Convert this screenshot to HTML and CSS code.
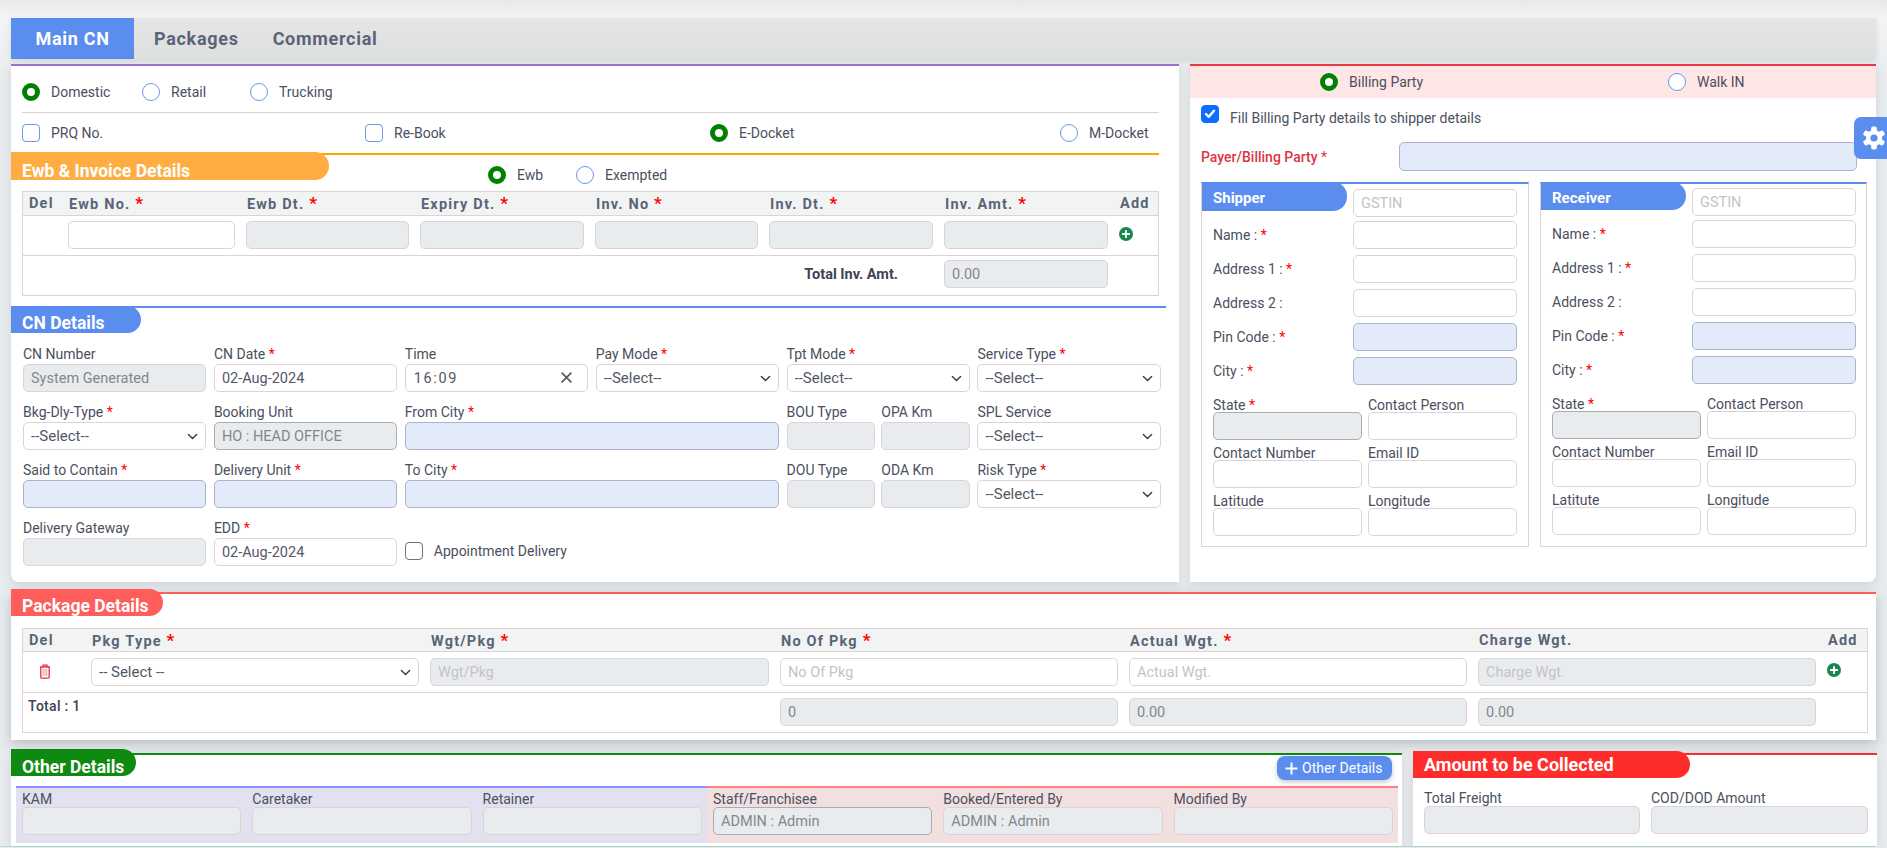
FILE: index.html
```html
<!DOCTYPE html>
<html lang="en">
<head>
<meta charset="utf-8">
<title>Main CN</title>
<link rel="stylesheet" href="styles.css">
</head>
<body>
<div class="page">
  <nav class="tabs">
    <a class="tab active">Main CN</a>
    <a class="tab first-plain">Packages</a>
    <a class="tab">Commercial</a>
  </nav>

  <div class="top-row">
    <section class="card left-card">
      <div class="opt-row type-row">
        <label class="opt w120"><input type="radio" class="radio" name="t" checked><span>Domestic</span></label>
        <label class="opt w108"><input type="radio" class="radio" name="t"><span>Retail</span></label>
        <label class="opt"><input type="radio" class="radio" name="t"><span>Trucking</span></label>
      </div>
      <div class="opt-row docket-row">
        <label class="opt w343"><input type="checkbox" class="check"><span>PRQ No.</span></label>
        <label class="opt w345"><input type="checkbox" class="check"><span>Re-Book</span></label>
        <label class="opt w350"><input type="radio" class="radio" name="d" checked><span>E-Docket</span></label>
        <label class="opt"><input type="radio" class="radio" name="d"><span>M-Docket</span></label>
      </div>

      <div class="sec sec-orange">
        <div class="sec-head">
          <h2 class="sec-tab tab-orange">Ewb &amp; Invoice Details</h2>
          <div class="ewb-opts">
            <label class="opt w88"><input type="radio" class="radio" name="e" checked><span>Ewb</span></label>
            <label class="opt"><input type="radio" class="radio" name="e"><span>Exempted</span></label>
          </div>
        </div>
        <div class="tbl ewb-tbl">
          <div class="tr th">
            <div class="del-h">Del</div>
            <div>Ewb No. <b>*</b></div><div>Ewb Dt. <b>*</b></div><div>Expiry Dt. <b>*</b></div>
            <div>Inv. No <b>*</b></div><div>Inv. Dt. <b>*</b></div><div>Inv. Amt. <b>*</b></div><div>Add</div>
          </div>
          <div class="tr td">
            <div></div>
            <div><input class="in"></div><div><input class="in off" disabled></div><div><input class="in off" disabled></div>
            <div><input class="in off" disabled></div><div><input class="in off" disabled></div><div><input class="in off" disabled></div>
            <div><svg class="add" viewBox="0 0 14 14"><circle cx="7" cy="7" r="7"/><path d="M7 3.8v6.4M3.8 7h6.4"/></svg></div>
          </div>
          <div class="tr td total">
            <div class="total-label">Total Inv. Amt.</div>
            <div><input class="in off" disabled value="0.00"></div>
            <div></div>
          </div>
        </div>
      </div>

      <div class="sec sec-blue">
        <div class="sec-head cn-head"><h2 class="sec-tab tab-blue">CN Details</h2></div>
        <div class="cn-grid">
          <div class="f"><label>CN Number</label><input class="in off" disabled value="System Generated"></div>
          <div class="f"><label>CN Date <b>*</b></label><input class="in" value="02-Aug-2024"></div>
          <div class="f"><label>Time</label>
            <div class="time"><input class="in spaced" value="16:09"><svg class="clear" viewBox="0 0 12 12"><path d="M1.5 1.5l9 9M10.5 1.5l-9 9"/></svg></div>
          </div>
          <div class="f"><label>Pay Mode <b>*</b></label><select class="in sel"><option>--Select--</option></select></div>
          <div class="f"><label>Tpt Mode <b>*</b></label><select class="in sel"><option>--Select--</option></select></div>
          <div class="f"><label>Service Type <b>*</b></label><select class="in sel"><option>--Select--</option></select></div>

          <div class="f"><label>Bkg-Dly-Type <b>*</b></label><select class="in sel"><option>--Select--</option></select></div>
          <div class="f"><label>Booking Unit</label><input class="in off dark" disabled value="HO : HEAD OFFICE"></div>
          <div class="f span2"><label>From City <b>*</b></label><input class="in req"></div>
          <div class="pair">
            <div class="f"><label>BOU Type</label><input class="in off" disabled></div>
            <div class="f"><label>OPA Km</label><input class="in off" disabled></div>
          </div>
          <div class="f"><label>SPL Service</label><select class="in sel"><option>--Select--</option></select></div>

          <div class="f"><label>Said to Contain <b>*</b></label><input class="in req"></div>
          <div class="f"><label>Delivery Unit <b>*</b></label><input class="in req"></div>
          <div class="f span2"><label>To City <b>*</b></label><input class="in req"></div>
          <div class="pair">
            <div class="f"><label>DOU Type</label><input class="in off" disabled></div>
            <div class="f"><label>ODA Km</label><input class="in off" disabled></div>
          </div>
          <div class="f"><label>Risk Type <b>*</b></label><select class="in sel"><option>--Select--</option></select></div>

          <div class="f"><label>Delivery Gateway</label><input class="in off" disabled></div>
          <div class="f"><label>EDD <b>*</b></label><input class="in" value="02-Aug-2024"></div>
          <div class="appt"><label class="opt"><input type="checkbox" class="check grey"><span>Appointment Delivery</span></label></div>
        </div>
      </div>
    </section>

    <section class="card right-card">
      <div class="band">
        <label class="opt w348"><input type="radio" class="radio" name="b" checked><span>Billing Party</span></label>
        <label class="opt"><input type="radio" class="radio" name="b"><span>Walk IN</span></label>
      </div>
      <label class="fill"><input type="checkbox" class="check on" checked><span>Fill Billing Party details to shipper details</span></label>
      <div class="payer"><label>Payer/Billing Party <b>*</b></label><input class="in req"></div>
      <div class="boxes">
        <div class="box">
          <div class="box-head"><h3>Shipper</h3><input class="in gstin" placeholder="GSTIN"></div>
          <div class="kv"><label>Name : <b>*</b></label><input class="in"></div>
          <div class="kv"><label>Address 1 : <b>*</b></label><input class="in"></div>
          <div class="kv"><label>Address 2 :</label><input class="in"></div>
          <div class="kv"><label>Pin Code : <b>*</b></label><input class="in req"></div>
          <div class="kv"><label>City : <b>*</b></label><input class="in req"></div>
          <div class="two">
            <div class="g"><label>State <b>*</b></label><input class="in off dark" disabled></div>
            <div class="g"><label>Contact Person</label><input class="in"></div>
            <div class="g"><label>Contact Number</label><input class="in"></div>
            <div class="g"><label>Email ID</label><input class="in"></div>
            <div class="g"><label>Latitude</label><input class="in"></div>
            <div class="g"><label>Longitude</label><input class="in"></div>
          </div>
        </div>
        <div class="box box-r">
          <div class="box-head"><h3>Receiver</h3><input class="in gstin" placeholder="GSTIN"></div>
          <div class="kv"><label>Name : <b>*</b></label><input class="in"></div>
          <div class="kv"><label>Address 1 : <b>*</b></label><input class="in"></div>
          <div class="kv"><label>Address 2 :</label><input class="in"></div>
          <div class="kv"><label>Pin Code : <b>*</b></label><input class="in req"></div>
          <div class="kv"><label>City : <b>*</b></label><input class="in req"></div>
          <div class="two">
            <div class="g"><label>State <b>*</b></label><input class="in off dark" disabled></div>
            <div class="g"><label>Contact Person</label><input class="in"></div>
            <div class="g"><label>Contact Number</label><input class="in"></div>
            <div class="g"><label>Email ID</label><input class="in"></div>
            <div class="g"><label>Latitute</label><input class="in"></div>
            <div class="g"><label>Longitude</label><input class="in"></div>
          </div>
        </div>
      </div>
      <button class="gear" aria-label="Settings">
        <svg viewBox="0 0 24 24"><g fill="#fff"><rect x="9.2" y="0.5" width="5.6" height="23" rx="1.8"/><rect x="9.2" y="0.5" width="5.6" height="23" rx="1.8" transform="rotate(60 12 12)"/><rect x="9.2" y="0.5" width="5.6" height="23" rx="1.8" transform="rotate(120 12 12)"/><circle cx="12" cy="12" r="8"/></g><circle cx="12" cy="12" r="3.6" fill="#5b8def"/></svg>
      </button>
    </section>
  </div>

  <section class="card pkg-card">
    <div class="sec-head pkg-head"><h2 class="sec-tab tab-red">Package Details</h2></div>
    <div class="tbl pkg-tbl">
      <div class="tr th">
        <div class="del-h">Del</div>
        <div>Pkg Type <b>*</b></div><div>Wgt/Pkg <b>*</b></div><div>No Of Pkg <b>*</b></div>
        <div>Actual Wgt. <b>*</b></div><div>Charge Wgt.</div><div>Add</div>
      </div>
      <div class="tr td">
        <div class="trash-cell">
          <svg class="trash" viewBox="0 0 12 15"><path class="t-line" d="M1 3h10M4 3V1.2h4V3M1.8 3v10.2c0 .6.4 1 1 1h6.4c.6 0 1-.4 1-1V3"/><path class="t-bars" d="M4.2 5v7M6 5v7M7.8 5v7"/></svg>
        </div>
        <div><select class="in sel"><option>-- Select --</option></select></div>
        <div><input class="in off" disabled placeholder="Wgt/Pkg"></div>
        <div><input class="in" placeholder="No Of Pkg"></div>
        <div><input class="in" placeholder="Actual Wgt."></div>
        <div><input class="in off" disabled placeholder="Charge Wgt."></div>
        <div><svg class="add" viewBox="0 0 14 14"><circle cx="7" cy="7" r="7"/><path d="M7 3.8v6.4M3.8 7h6.4"/></svg></div>
      </div>
      <div class="tr td total">
        <div class="pkg-total">Total : 1</div>
        <div><input class="in off" disabled value="0"></div>
        <div><input class="in off" disabled value="0.00"></div>
        <div><input class="in off" disabled value="0.00"></div>
        <div></div>
      </div>
    </div>
  </section>

  <div class="bottom-row">
    <section class="card other-card">
      <div class="sec-head other-head">
        <h2 class="sec-tab tab-green">Other Details</h2>
        <button class="more"><svg viewBox="0 0 12 12"><path d="M6 .5v11M.5 6h11"/></svg>Other Details</button>
      </div>
      <div class="panels">
        <div class="panel panel-violet">
          <div class="f"><label>KAM</label><input class="in off" disabled></div>
          <div class="f"><label>Caretaker</label><input class="in off" disabled></div>
          <div class="f"><label>Retainer</label><input class="in off" disabled></div>
        </div>
        <div class="panel panel-rose">
          <div class="f"><label>Staff/Franchisee</label><input class="in off dark" disabled value="ADMIN : Admin"></div>
          <div class="f"><label>Booked/Entered By</label><input class="in off" disabled value="ADMIN : Admin"></div>
          <div class="f"><label>Modified By</label><input class="in off" disabled></div>
        </div>
      </div>
    </section>
    <section class="card amount-card">
      <div class="sec-head amount-head"><h2 class="sec-tab tab-crimson">Amount to be Collected</h2></div>
      <div class="amount-grid">
        <div class="f"><label>Total Freight</label><input class="in off" disabled></div>
        <div class="f"><label>COD/DOD Amount</label><input class="in off" disabled></div>
      </div>
    </section>
  </div>
  <div class="foot-line"></div>
</div>
</body>
</html>
```

FILE: styles.css
```css
* { box-sizing: border-box; }
html, body { margin: 0; height: 100%; }
body {
  background: linear-gradient(#e6e8ea 0, #f3f4f5 16px, #e9ecef 80px);
  font: 14px/20px Roboto, "Liberation Sans", sans-serif;
  color: #4a5060;
  overflow: hidden;
}
.page { width: 1887px; height: 848px; padding: 18px 0 0 11px; overflow: hidden; border-top: 1px solid #fff; margin-top: -1px; }
b { font-weight: 400; color: #f00; }
h2, h3 { margin: 0; }
label { display: block; }

/* tabs */
.tabs { display: flex; width: 1865px; height: 41px; background: linear-gradient(#e5e5e5, #dedfdf); box-shadow: 0 2px 6px rgba(0,0,0,.1); }
.tab { padding: 0 17px; font-size: 18px; font-weight: 700; line-height: 41px; color: #5a6478; letter-spacing: .7px; }
.tab.active { width: 123px; padding: 0; text-align: center; background: #5b8def; color: #fff; }
.first-plain { margin-left: 3px; }

/* cards */
.top-row { display: flex; gap: 11px; margin-top: 5px; height: 518px; }
.card { background: #fff; box-shadow: 0 3px 10px rgba(60,70,80,.14); }
.left-card { width: 1168px; border-top: 2px solid #9b70d4; border-bottom-left-radius: 8px; padding-left: 11px; }
.right-card { width: 686px; border-top: 2px solid #e63946; border-bottom-right-radius: 8px; position: relative; }

/* options */
.opt-row { display: flex; align-items: center; width: 1137px; }
.type-row { height: 47px; padding-top: 5px; border-bottom: 1px solid #d4d4d4; }
.docket-row { height: 40px; }
.opt { display: inline-flex; align-items: center; gap: 11px; }
.w120 { width: 120px; } .w108 { width: 108px; } .w343 { width: 343px; } .w345 { width: 345px; } .w350 { width: 350px; } .w88 { width: 88px; } .w348 { width: 348px; }
.radio, .check { appearance: none; margin: 0; flex: none; width: 18px; height: 18px; background: #fff; border: 1px solid #6d97e9; }
.radio { border-radius: 50%; }
.radio:checked { border: 5px solid #008000; }
.check { border-radius: 4px; }
.check.grey { border-color: #6d7378; }
.check.on {
  background: #0d6efd url("data:image/svg+xml,%3Csvg xmlns='http://www.w3.org/2000/svg' viewBox='0 0 20 20'%3E%3Cpath fill='none' stroke='%23fff' stroke-linecap='round' stroke-linejoin='round' stroke-width='3' d='M5 10l3.5 3.5L15 6'/%3E%3C/svg%3E") center/100% no-repeat;
  border-color: #0d6efd;
}

/* sections */
.sec { border-top: 2px solid; }
.sec-orange { width: 1148px; border-color: #ffa500; margin-left: -11px; }
.sec-blue { width: 1155px; border-color: #5b8def; margin: 10px 0 0 -11px; }
.sec-head { display: flex; }
.sec-tab { font-size: 17.5px; font-weight: 700; color: #fff; padding-left: 11px; border-radius: 0 14px 14px 0; height: 28px; white-space: nowrap; overflow: hidden; }
.tab-orange { width: 318px; margin-top: -3px; background: #ffad42; line-height: 38px; }
.tab-blue { width: 130px; height: 27px; margin-top: -2px; background: #5b8def; line-height: 34px; }
.tab-red { width: 152px; height: 27px; margin-top: -5px; background: #ff5c5c; line-height: 34px; }
.tab-green { width: 125px; height: 27px; margin-top: -6px; background: #0f8a10; line-height: 36px; }
.tab-crimson { width: 277px; height: 27px; margin-top: -4px; background: #ff2c2c; font-size: 18px; line-height: 28px; }
.ewb-opts { display: flex; align-items: center; margin: 11px 0 0 159px; height: 18px; }
.sec-orange .sec-head { height: 36px; }

/* tables */
.tbl { border: 1px solid #ddd3d6; margin-left: 11px; }
.ewb-tbl { width: 1137px; height: 105px; }
.tr { display: grid; }
.ewb-tbl .tr { grid-template-columns: 45px 178px 174px 175px 174px 175px 175px 1fr; }
.pkg-tbl .tr { grid-template-columns: 68px 339px 350px 349px 349px 349px 1fr; }
.th { height: 24px; background: #f2f4f4; border-bottom: 1px solid #ddd3d6; font-size: 14.5px; font-weight: 700; letter-spacing: 1.2px; color: #5a6478; line-height: 23px; }
.pkg-tbl .th { height: 23px; }
.th > div { padding-left: 1px; white-space: nowrap; }
.th .del-h { padding-left: 6px; }
.th b { font-weight: 700; font-size: 17px; }
.td > div { padding-right: 11px; }
.ewb-tbl .td { height: 40px; padding-top: 5px; border-bottom: 1px solid #ddd3d6; }
.ewb-tbl .total { height: 39px; padding-top: 4px; border-bottom: 0; grid-template-columns: 921px 175px 1fr; }
.total-label { text-align: right; padding: 5px 46px 0 0 !important; font-size: 14.5px; font-weight: 700; color: #3e4356; }
.pkg-tbl { width: 1846px; height: 105px; }
.pkg-tbl .td { height: 41px; padding-top: 6px; border-bottom: 1px solid #ddd3d6; }
.pkg-tbl .total { height: 40px; padding-top: 5px; border-bottom: 0; grid-template-columns: 757px 349px 349px 349px 1fr; }
.pkg-total { padding-left: 5px; line-height: 16px; font-weight: 500; letter-spacing: .3px; color: #3e4356; }
.add { width: 14px; height: 14px; display: block; margin: 6px 0 0 0; }
.add circle { fill: #198754; }
.add path { stroke: #fff; stroke-width: 1.8; stroke-linecap: round; }
.pkg-tbl .add { margin: 5px 0 0 0; }
.trash-cell { padding: 6px 0 0 16px !important; }
.trash { width: 12px; height: 15px; display: block; }
.t-line { fill: none; stroke: #dc3545; stroke-width: 1.3; }
.t-bars { fill: none; stroke: #f0a8a8; stroke-width: 1.2; }

/* inputs */
.in { display: block; width: 100%; height: 28px; padding: 0 7px; border: 1px solid #ddd3d6; border-radius: 5px; background: #fff; font: 14.5px Roboto, "Liberation Sans", sans-serif; color: #525866; outline: 0; }
.in::placeholder { color: #c4c4c4; opacity: 1; }
.off { background: #e9ecef; color: #83878c; }
.dark { border-color: #a9adb1; }
.req { background: #e3eafa; border-color: #a9b3c9; }
.sel { appearance: none; font-size: 15px; background: #fff url("data:image/svg+xml,%3Csvg xmlns='http://www.w3.org/2000/svg' viewBox='0 0 16 16'%3E%3Cpath fill='none' stroke='%23343a40' stroke-linecap='round' stroke-linejoin='round' stroke-width='2' d='M2 5l6 6 6-6'/%3E%3C/svg%3E") right 7px center/11px no-repeat; }
.spaced { letter-spacing: 1.6px; padding-left: 8px; }
.time { position: relative; }
.clear { position: absolute; right: 15px; top: 7px; width: 13px; height: 13px; fill: none; stroke: #565b63; stroke-width: 1.6; }

/* CN grid */
.cn-head { height: 26px; }
.cn-grid { display: grid; grid-template-columns: repeat(6, 183.4px); gap: 10px 7.5px; margin: 10px 0 0 12px; }
.f > label { height: 20px; line-height: 20px; white-space: nowrap; }
.span2 { grid-column: span 2; }
.pair { display: grid; grid-template-columns: 1fr 1fr; gap: 6px; }
.appt { display: flex; align-items: flex-end; height: 48px; padding-bottom: 5px; }

/* right */
.band { display: flex; align-items: center; height: 32px; padding-left: 130px; background: #ffe6e6; }
.fill { display: flex; height: 44px; padding: 7px 0 0 11px; gap: 11px; }
.fill span { margin-top: 3px; }
.payer { display: flex; align-items: center; padding-left: 11px; }
.payer label { width: 198px; font-weight: 500; color: #dc3545; }
.payer b { color: #dc3545; }
.payer .in { width: 458px; height: 29px; }
.boxes { display: flex; gap: 11px; margin: 11px 0 0 11px; }
.box { width: 328px; height: 365px; border: 1px solid #ddd3d6; border-top: 2px solid #5b8def; padding-left: 11px; }
.box-r { width: 327px; }
.box-head { display: flex; margin: -2px 0 6px -11px; height: 33px; }
.box-head h3 { width: 145px; height: 29px; padding-left: 11px; background: #5b8def; color: #fff; font-size: 15px; font-weight: 700; line-height: 33px; border-radius: 0 14px 14px 0; }
.gstin { width: 164px; margin: 7px 0 0 6px; }
.box-r .box-head { height: 32px; }
.box-r h3 { height: 28px; line-height: 33px; }
.box-r .gstin { margin-top: 6px; }
.kv { display: grid; grid-template-columns: 140px 164px; align-items: center; margin-bottom: 6px; }
.two { display: grid; grid-template-columns: 149px 149px; gap: 6px 6px; margin-top: 13px; }
.g label { height: 14px; line-height: 14px; white-space: nowrap; }
.gear { position: absolute; left: 664px; top: 51px; width: 40px; height: 42px; padding: 0 0 0 8px; border: 0; border-radius: 7px 0 0 7px; background: #5b8def; }
.gear svg { display: block; width: 24px; height: 24px; }

/* package */
.pkg-card { width: 1865px; height: 148px; margin-top: 10px; border-top: 2px solid #ff5c5c; box-shadow: 0 4px 12px rgba(40,50,60,.25); }
.pkg-head { height: 34px; }

/* bottom */
.bottom-row { display: flex; gap: 11px; margin-top: 13px; height: 93px; }
.other-card { width: 1391px; border-top: 2px solid #0f8a10; }
.other-head { justify-content: space-between; height: 31px; }
.more { display: flex; align-items: center; gap: 4px; height: 24px; width: 115px; margin: 1px 10px 0 0; padding: 0 0 0 8px; border: 0; border-radius: 8px; background: #5b8def; box-shadow: 0 2px 5px rgba(60,70,100,.3); color: #fff; font: 14px Roboto, sans-serif; white-space: nowrap; }
.more svg { width: 13px; height: 13px; flex: none; stroke: #fff; stroke-width: 1.8; fill: none; }
.panels { display: grid; grid-template-columns: 691px 691px; margin-left: 5px; }
.panel { display: grid; grid-template-columns: repeat(3, 219.3px); gap: 11px; height: 57px; padding: 3px 0 0 6px; border-top: 2px solid; }
.panel .f > label, .amount-grid .f > label { height: 16px; line-height: 16px; }
.panel-violet { background: #e3e0f0; border-color: #8f8fff; }
.panel-rose { background: #f2e0e0; border-color: #ff8080; }
.amount-card { width: 464px; border-top: 2px solid #ff2c2c; }
.amount-head { height: 31px; }
.amount-grid { display: grid; grid-template-columns: 216px 217px; gap: 11px; margin-left: 11px; padding-top: 4px; }
.foot-line { width: 1876px; margin-left: -11px; height: 1px; background: #b9dcdc; }
```
